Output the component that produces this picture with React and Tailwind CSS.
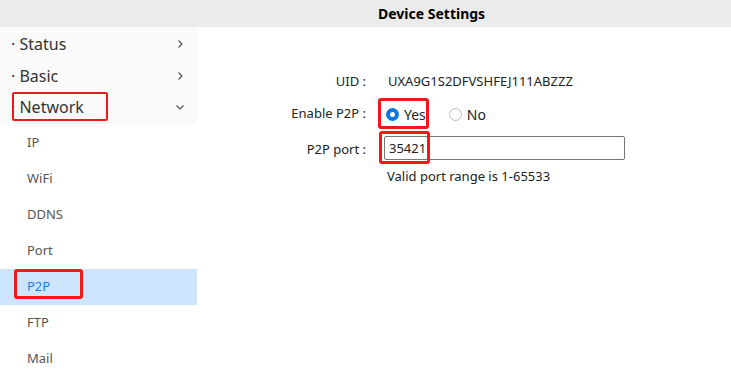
import React, { useState } from "react";

const subItems = ["IP", "WiFi", "DDNS", "Port", "P2P", "FTP", "Mail"];

const Chevron = ({ down }) => (
  <svg width="10" height="10" viewBox="0 0 10 10" fill="none" stroke="#555" strokeWidth="1.2">
    {down ? <path d="M1.5 3.5 L5 7 L8.5 3.5" /> : <path d="M3.5 1.5 L7 5 L3.5 8.5" />}
  </svg>
);

const App = () => {
  const [enabled, setEnabled] = useState(true);
  const [port, setPort] = useState("35421");

  return (
    <div
      className="w-[731px] h-[369px] overflow-hidden bg-white text-[#333]"
      style={{ fontFamily: '"Noto Sans", "Noto Sans CJK SC", sans-serif' }}
    >
      <div className="h-[27px] bg-[#ebebeb] flex items-center pl-[378px] text-[14px] font-bold text-black">
        Device Settings
      </div>

      <div className="flex">
        <div className="w-[197px] shrink-0">
          <div className="bg-[#fafafa] pt-[1px] pb-[2px]">
            {["Status", "Basic"].map((m) => (
              <div key={m} className="h-[32px] flex items-center justify-between pl-[11px] pr-[12px] text-[16px] text-[#333]">
                <span>· {m}</span>
                <Chevron />
              </div>
            ))}
            <div className="h-[30px] flex items-center justify-between pl-[11px] pr-[12px] text-[16px] text-[#333]">
              <span className="relative">
                · Network
                <span className="absolute left-[1px] top-[-3px] w-[96px] h-[29px] border-2 border-[#f01818] rounded-[2px]" />
              </span>
              <Chevron down />
            </div>
          </div>
          <div className="pt-[1px]">
            {subItems.map((s) => (
              <div
                key={s}
                className={`h-[36px] flex items-center pl-[27px] text-[13px] ${
                  s === "P2P" ? "bg-[#cce4fc] text-[#1a7fe8]" : "text-[#555]"
                }`}
              >
                <span className="relative">
                  {s}
                  {s === "P2P" && (
                    <span className="absolute left-[-13px] top-[-8px] w-[69px] h-[30px] border-[3px] border-[#f01818] rounded-[3px]" />
                  )}
                </span>
              </div>
            ))}
          </div>
        </div>

        <div className="flex-1 pt-[46px] text-[13px] text-[#222]">
          <div className="flex items-center h-[18px]">
            <div className="w-[171px] text-right pr-[2px]">UID :</div>
            <div className="pl-[20px]">UXA9G1S2DFVSHFEJ111ABZZZ</div>
          </div>
          <div className="flex items-center h-[18px] mt-[14px]">
            <div className="w-[171px] text-right pr-[2px]">Enable P2P :</div>
            <div className="flex items-center pl-[18px]">
              <label className="relative flex items-center gap-[5px] cursor-pointer">
                <input type="radio" className="hidden" checked={enabled} onChange={() => setEnabled(true)} />
                <span className={`w-[13px] h-[13px] rounded-full ${enabled ? "border-[4px] border-[#0b78e3]" : "border border-[#bbb]"}`} />
                <span className="text-[14px]">Yes</span>
                <span className="absolute left-[-8px] top-[-6px] w-[51px] h-[31px] border-[3px] border-[#f01818] rounded-[3px]" />
              </label>
              <label className="flex items-center gap-[5px] ml-[23px] cursor-pointer">
                <input type="radio" className="hidden" checked={!enabled} onChange={() => setEnabled(false)} />
                <span className={`w-[13px] h-[13px] rounded-full ${!enabled ? "border-[4px] border-[#0b78e3]" : "border border-[#bbb]"}`} />
                <span className="text-[14px]">No</span>
              </label>
            </div>
          </div>
          <div className="flex items-center mt-[13px]">
            <div className="w-[171px] text-right pr-[2px] pt-[4px]">P2P port :</div>
            <div className="relative ml-[16px]">
              <input
                value={port}
                onChange={(e) => setPort(e.target.value)}
                className="w-[241px] h-[24px] border border-[#777] rounded-[2px] px-[4px] text-[13px] outline-none"
              />
              <span className="absolute left-[-5px] top-[-5px] w-[51px] h-[33px] border-[3px] border-[#f01818] rounded-[3px] pointer-events-none" />
            </div>
          </div>
          <div className="pl-[190px] mt-[7px]">Valid port range is 1-65533</div>
        </div>
      </div>
    </div>
  );
};

export default App;
